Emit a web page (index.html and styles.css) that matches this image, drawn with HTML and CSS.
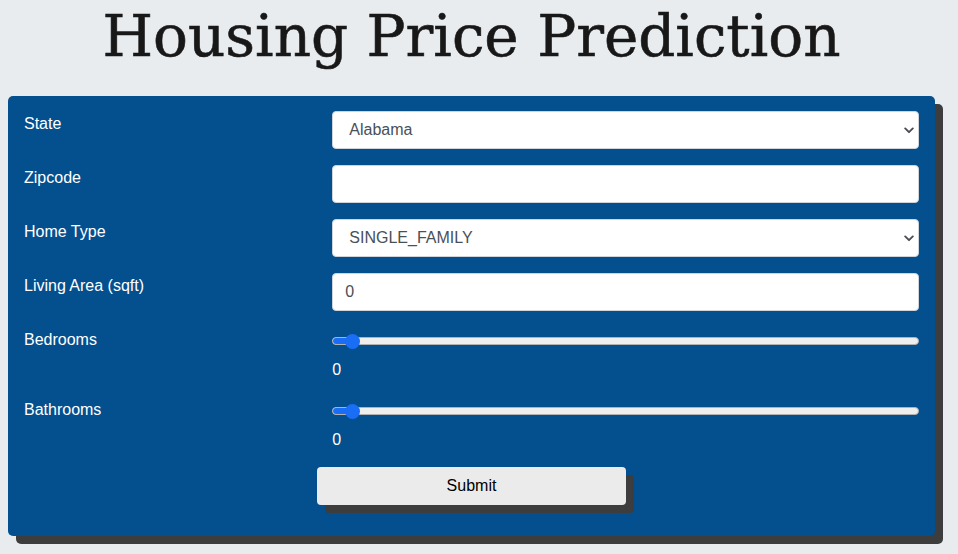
FILE: index.html
```html
<!DOCTYPE html>
<html lang="en">
<head>
<meta charset="utf-8">
<title>Housing Price Prediction</title>
<link rel="stylesheet" href="styles.css">
</head>
<body>
<div class="page">
  <h1 class="title">Housing Price Prediction</h1>
  <form class="card">
    <div class="grid">
      <label class="label">State</label>
      <div class="select-wrap">
        <select class="control select"><option>Alabama</option></select>
        <svg class="chev" width="10" height="7" viewBox="0 0 10 7"><path d="M1.2 1.4 L5 5.2 L8.8 1.4" fill="none" stroke="#4a4d52" stroke-width="1.9" stroke-linecap="round" stroke-linejoin="round"/></svg>
      </div>

      <label class="label">Zipcode</label>
      <input class="control" type="text" value="">

      <label class="label">Home Type</label>
      <div class="select-wrap">
        <select class="control select"><option>SINGLE_FAMILY</option></select>
        <svg class="chev" width="10" height="7" viewBox="0 0 10 7"><path d="M1.2 1.4 L5 5.2 L8.8 1.4" fill="none" stroke="#4a4d52" stroke-width="1.9" stroke-linecap="round" stroke-linejoin="round"/></svg>
      </div>

      <label class="label">Living Area (sqft)</label>
      <input class="control" type="text" value="0">

      <label class="label">Bedrooms</label>
      <div class="range-block">
        <div class="slider"><div class="track"><div class="fill" style="width:20px"></div></div><span class="thumb" style="left:13px"></span></div>
        <div class="value">0</div>
      </div>

      <label class="label">Bathrooms</label>
      <div class="range-block">
        <div class="slider"><div class="track"><div class="fill" style="width:20px"></div></div><span class="thumb" style="left:13px"></span></div>
        <div class="value">0</div>
      </div>
    </div>
    <div class="actions">
      <button class="submit" type="button">Submit</button>
    </div>
  </form>
</div>
</body>
</html>
```
FILE: styles.css
```css
html, body {
  margin: 0;
  padding: 0;
  background: #e8ecef;
}
body {
  padding: 0 8px 18px 8px;
  font-family: "Liberation Sans", Arial, sans-serif;
}
.page {
  width: 927px;
}
.title {
  margin: 0;
  height: 96px;
  text-align: center;
  font-family: "DejaVu Serif", serif;
  font-weight: normal;
  font-size: 58px;
  line-height: 72px;
  color: #181818;
  letter-spacing: 0;
  -webkit-text-stroke: 0.6px #181818;
}
.card {
  background: #044f8e;
  border-radius: 5px;
  box-shadow: 8px 8px 0 #3d3d3d;
  padding: 15px 16px 31px 16px;
}
.grid {
  display: grid;
  grid-template-columns: 1fr 2fr;
  column-gap: 15px;
  row-gap: 16px;
  align-items: start;
}
.label {
  color: #ffffff;
  font-size: 16px;
  line-height: 24px;
  padding-top: 1px;
}
.control {
  box-sizing: border-box;
  display: block;
  width: 100%;
  height: 38px;
  margin: 0;
  padding: 6px 12px;
  border: 1px solid #ced4da;
  border-radius: 4px;
  background: #ffffff;
  color: #495057;
  font-family: "Liberation Sans", Arial, sans-serif;
  font-size: 16px;
  line-height: 24px;
  outline: none;
}
.select-wrap {
  position: relative;
}
.select {
  appearance: none;
  -webkit-appearance: none;
  padding-left: 16px;
}
.chev {
  position: absolute;
  right: 5px;
  top: 16px;
  pointer-events: none;
}
.range-block {
  display: flex;
  flex-direction: column;
  gap: 2px;
}
.slider {
  position: relative;
  height: 28px;
  display: flex;
  align-items: center;
}
.track {
  position: relative;
  box-sizing: border-box;
  width: 100%;
  height: 8px;
  background: #efefef;
  border: 1px solid #b2b2b2;
  border-radius: 4px;
  overflow: hidden;
}
.fill {
  position: absolute;
  left: 0;
  top: -1px;
  bottom: -1px;
  background: #1a6df5;
  border-radius: 4px 0 0 4px;
}
.thumb {
  position: absolute;
  top: 7px;
  width: 15px;
  height: 15px;
  border-radius: 50%;
  background: #1a6df5;
}
.value {
  box-sizing: border-box;
  height: 24px;
  padding-top: 1px;
  color: #ffffff;
  font-size: 16px;
  line-height: 24px;
}
.actions {
  display: flex;
  justify-content: center;
  margin-top: 16px;
}
.submit {
  width: 309px;
  height: 38px;
  border: none;
  border-radius: 4px;
  background: #ebebeb;
  box-shadow: 8px 8px 0 #3d3d3d;
  color: #000000;
  font-family: "Liberation Sans", Arial, sans-serif;
  font-size: 16px;
}
```
